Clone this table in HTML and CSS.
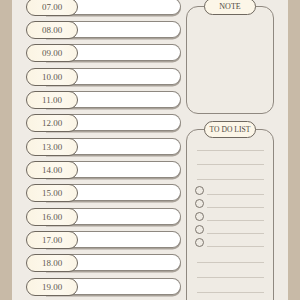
FILE: index.html
```html
<!DOCTYPE html>
<html>
<head>
<meta charset="utf-8">
<link rel="stylesheet" href="styles.css">
</head>
<body>
<div class="page">
  <div class="strip"></div>
  <div class="sheet">
    <div class="schedule">
      <div class="row"><div class="bar"></div><div class="time">07.00</div></div>
      <div class="row"><div class="bar"></div><div class="time">08.00</div></div>
      <div class="row"><div class="bar"></div><div class="time">09.00</div></div>
      <div class="row"><div class="bar"></div><div class="time">10.00</div></div>
      <div class="row"><div class="bar"></div><div class="time">11.00</div></div>
      <div class="row"><div class="bar"></div><div class="time">12.00</div></div>
      <div class="row"><div class="bar"></div><div class="time">13.00</div></div>
      <div class="row"><div class="bar"></div><div class="time">14.00</div></div>
      <div class="row"><div class="bar"></div><div class="time">15.00</div></div>
      <div class="row"><div class="bar"></div><div class="time">16.00</div></div>
      <div class="row"><div class="bar"></div><div class="time">17.00</div></div>
      <div class="row"><div class="bar"></div><div class="time">18.00</div></div>
      <div class="row"><div class="bar"></div><div class="time">19.00</div></div>
    </div>
    <div class="side">
      <div class="box note">
        <div class="label">NOTE</div>
      </div>
      <div class="box todo">
        <div class="label">TO DO LIST</div>
        <div class="lines top">
          <div class="line"></div>
          <div class="line"></div>
          <div class="line"></div>
        </div>
        <div class="checks">
          <div class="check"><span class="circle"></span><span class="cline"></span></div>
          <div class="check"><span class="circle"></span><span class="cline"></span></div>
          <div class="check"><span class="circle"></span><span class="cline"></span></div>
          <div class="check"><span class="circle"></span><span class="cline"></span></div>
          <div class="check"><span class="circle"></span><span class="cline"></span></div>
        </div>
        <div class="lines bottom">
          <div class="line"></div>
          <div class="line"></div>
          <div class="line"></div>
        </div>
      </div>
    </div>
  </div>
  <div class="strip"></div>
</div>
</body>
</html>
```

FILE: styles.css
```css
html, body {
  margin: 0;
  padding: 0;
  background: #efebe5;
}
body {
  width: 300px;
  height: 300px;
  overflow: hidden;
  font-family: "Liberation Serif", "DejaVu Serif", serif;
}
.page {
  display: flex;
  width: 300px;
  height: 300px;
  overflow: hidden;
}
.strip {
  width: 12px;
  flex: none;
  background: #c8baa7;
}
.sheet {
  flex: 1;
  display: flex;
  padding: 0 14px;
  gap: 5px;
  background: #efebe5;
  overflow: hidden;
}
.schedule {
  width: 155px;
  flex: none;
  display: flex;
  flex-direction: column;
  gap: 5.33px;
  margin-top: -2.4px;
}
.row {
  display: grid;
  height: 18px;
  flex: none;
}
.row > * {
  grid-area: 1 / 1;
}
.bar {
  height: 17px;
  background: #ffffff;
  border: 1px solid #8e8880;
  border-left: none;
  border-radius: 0 9px 9px 0;
  box-sizing: border-box;
  box-shadow: 0 1.5px 0 #a9a299;
  margin-left: 20px;
}
.time {
  width: 52px;
  height: 18px;
  box-sizing: border-box;
  border: 1px solid #6f685f;
  border-radius: 9px;
  background: linear-gradient(90deg, #fbf4e3, #fdf9ef 60%, #fbf5e6);
  color: #5f5850;
  font-size: 9px;
  line-height: 16px;
  text-align: center;
  justify-self: start;
}
.side {
  width: 88px;
  flex: none;
  display: flex;
  flex-direction: column;
  gap: 15px;
  padding-top: 6px;
}
.box {
  box-sizing: border-box;
  border: 1px solid #8f8880;
  border-radius: 12px;
  background: #efebe4;
  display: flex;
  flex-direction: column;
  align-items: center;
}
.note {
  height: 108px;
  flex: none;
}
.todo {
  height: 200px;
  flex: none;
}
.label {
  margin-top: -9.5px;
  width: 52px;
  height: 17px;
  box-sizing: border-box;
  border: 1px solid #6f685f;
  border-radius: 9px;
  background: #fcf6e8;
  color: #4f4942;
  font-size: 8px;
  line-height: 15px;
  text-align: center;
  white-space: nowrap;
}
.todo .label {
  font-size: 7.6px;
}
.lines {
  width: 67px;
  display: flex;
  flex-direction: column;
}
.line {
  height: 1px;
  background: #cfc9c0;
}
.lines.top {
  margin-top: 12px;
  gap: 13.5px;
}
.checks {
  width: 69px;
  margin-top: 6px;
  display: flex;
  flex-direction: column;
  gap: 4px;
  margin-left: -2px;
}
.check {
  display: flex;
  align-items: flex-end;
  height: 9px;
  gap: 3px;
}
.circle {
  width: 9px;
  height: 9px;
  box-sizing: border-box;
  border: 1px solid #7d766e;
  border-radius: 50%;
  flex: none;
}
.cline {
  flex: 1;
  height: 1px;
  background: #cfc9c0;
  margin-bottom: 0;
}
.lines.bottom {
  margin-top: 15px;
  gap: 14px;
}
```
